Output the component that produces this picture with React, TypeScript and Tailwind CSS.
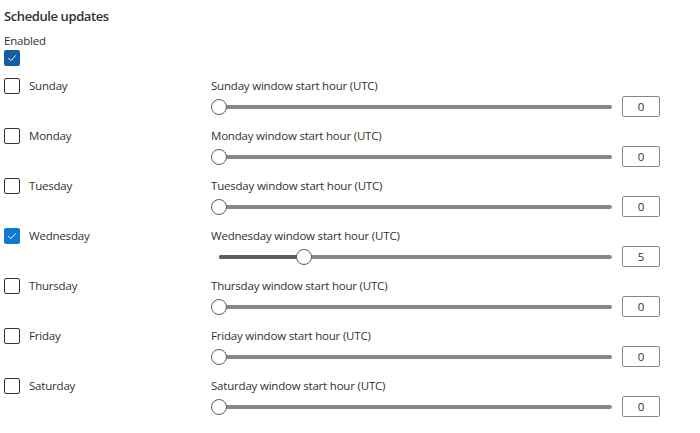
import React, { useState } from 'react';

const DAYS = ['Sunday', 'Monday', 'Tuesday', 'Wednesday', 'Thursday', 'Friday', 'Saturday'];
const MAX_HOUR = 23;

function Check({ checked, dark, onClick }: { checked: boolean; dark?: boolean; onClick?: () => void }) {
  if (!checked) {
    return <button onClick={onClick} className="w-4 h-4 shrink-0 rounded-[2px] border border-[#323130] bg-white" />;
  }
  return (
    <button onClick={onClick} className={`w-4 h-4 shrink-0 rounded-[2px] flex items-center justify-center ${dark ? 'bg-[#115ea3]' : 'bg-[#0f78d4]'}`}>
      <svg width="12" height="12" viewBox="0 0 12 12" fill="none">
        <path d="M2.5 6.2 L4.9 8.6 L9.6 3.6" stroke="white" strokeWidth="1" strokeLinecap="round" strokeLinejoin="round" />
      </svg>
    </button>
  );
}

function HourSlider({ value }: { value: number }) {
  const pos = (value / MAX_HOUR) * 393;
  return (
    <div className="relative w-[401px] h-4">
      <div className="absolute left-2 right-0 top-[6px] h-1 rounded-full bg-[#8a8886]" />
      <div className="absolute left-2 top-[6px] h-1 rounded-full bg-[#605e5c]" style={{ width: pos }} />
      <div className="absolute top-0 w-4 h-4 rounded-full border border-[#605e5c] bg-white" style={{ left: pos }} />
    </div>
  );
}

export default function App() {
  const [enabled, setEnabled] = useState(true);
  const [days, setDays] = useState<Record<string, boolean>>({ Wednesday: true });
  const hours: Record<string, number> = { Wednesday: 5 };

  return (
    <div className="w-[700px] h-[433px] bg-white pl-1 pt-[6px] text-[#323130]" style={{ fontFamily: '"Open Sans", sans-serif' }}>
      <h2 className="text-[13px] leading-5 font-semibold tracking-[-0.4px]">Schedule updates</h2>
      <div className="mt-[7px] text-[11.5px] leading-4 tracking-[-0.2px]">Enabled</div>
      <div className="mt-[1px]">
        <Check checked={enabled} dark onClick={() => setEnabled(!enabled)} />
      </div>

      <div className="mt-[10px] text-[11.5px] tracking-[-0.2px]">
        {DAYS.map(day => (
          <div key={day} className="flex h-[50px]">
            <div className="w-[207px] h-5 flex items-center gap-[9px]">
              <Check checked={!!days[day]} onClick={() => setDays({ ...days, [day]: !days[day] })} />
              <span>{day}</span>
            </div>
            <div className="flex flex-col">
              <div className="h-5 leading-5">{day} window start hour (UTC)</div>
              <div className="flex items-center h-[21px] gap-[10px]">
                <HourSlider value={hours[day] ?? 0} />
                <div className="w-[38px] h-[21px] border border-[#8a8886] rounded-[2px] flex items-center justify-center">
                  {hours[day] ?? 0}
                </div>
              </div>
            </div>
          </div>
        ))}
      </div>
    </div>
  );
}
